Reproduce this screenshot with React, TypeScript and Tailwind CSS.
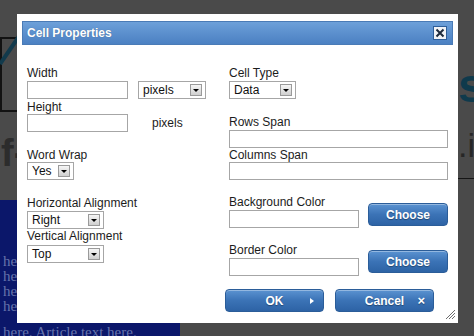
import React from "react";

const font = { fontFamily: '"Liberation Sans", Arial, sans-serif' };

const Label: React.FC<{ children: React.ReactNode; className?: string }> = ({ children, className = "" }) => (
    <div className={`h-[14px] whitespace-nowrap text-[12px] leading-[14px] text-[#1c1c1c] ${className}`}>{children}</div>
);

const Field: React.FC<{ className?: string }> = ({ className = "" }) => (
    <input readOnly className={`block h-[18px] border border-[#a6a6a6] bg-white outline-none ${className}`} />
);

const Select: React.FC<{ value: string; className?: string }> = ({ value, className = "" }) => (
    <div className={`flex h-[18px] items-center justify-between border border-[#a6a6a6] bg-white pl-[4px] pr-[3px] ${className}`}>
        <span className="text-[12px] leading-none text-[#111]">{value}</span>
        <span className="flex h-[12px] w-[12px] items-center justify-center border border-[#9a9a9a] bg-gradient-to-b from-[#f6f6f6] to-[#cfcfcf]">
            <span className="h-0 w-0 border-x-[3px] border-t-[3px] border-x-transparent border-t-black" />
        </span>
    </div>
);

const BlueButton: React.FC<{ children: React.ReactNode; className?: string; icon?: React.ReactNode }> = ({ children, className = "", icon }) => (
    <button className={`relative flex h-[23px] items-center justify-center rounded-[4px] border border-[#2b5d99] bg-gradient-to-b from-[#5b93d1] via-[#3b73b6] to-[#2d63a5] text-[12px] font-bold text-white shadow-[inset_0_1px_0_rgba(255,255,255,0.35)] [text-shadow:0_1px_1px_rgba(0,0,0,0.35)] ${className}`}>
        {children}
        {icon}
    </button>
);

const App: React.FC = () => {
    return (
        <div className="relative h-[336px] w-[474px] overflow-hidden bg-[#4a4a4a]" style={font}>
            {/* dimmed page behind the dialog */}
            <div className="flex h-full">
                <div className="flex w-[180px] flex-col">
                    <div className="relative h-[200px]">
                        <div className="ml-0 mt-[37px] h-[75px] w-[60px] border-2 border-[#121212]" />
                        <svg className="absolute left-0 top-[28px]" width="30" height="40" viewBox="0 0 30 40">
                            <line x1="0" y1="36" x2="22" y2="4" stroke="#123a4c" strokeWidth="4" />
                        </svg>
                        <div className="mt-[22px] pl-[1px] text-[38px] font-bold leading-none text-[#2c2c2c]">f-</div>
                    </div>
                    <div className="flex-1 overflow-hidden whitespace-nowrap bg-[#0b176a] pl-[3px] pt-[54px] text-[15px] leading-[15px] text-[#6673ab]" style={{ fontFamily: '"Liberation Serif", serif' }}>
                        <div>here. Article text here.</div>
                        <div>here. Article text here.</div>
                        <div>here. Article text here.</div>
                        <div>here. Article text here.</div>
                        <div className="mt-[11px]">here. Article text here.</div>
                    </div>
                </div>
                <div className="flex-1" />
                <div className="flex w-[16px] flex-col overflow-hidden whitespace-nowrap">
                    <div className="mt-[62px] text-[48px] font-bold leading-none text-[#0f3a4c]">s</div>
                    <div className="mt-[18px] text-[34px] leading-none text-[#262626]">.i</div>
                    <div className="mt-[16px] h-px bg-[#151515]" />
                </div>
            </div>

            {/* dialog */}
            <div className="absolute left-[17px] top-[14px] h-[309px] w-[441px] bg-white">
                <div className="mx-[5px] mt-[7px] flex h-[24px] items-center justify-between border border-[#4a7bb6] bg-gradient-to-b from-[#6da0d9] to-[#4b80c2] pl-[4px] pr-[5px]">
                    <span className="text-[12px] font-bold text-white [text-shadow:0_0_1px_rgba(0,0,0,0.3)]">Cell Properties</span>
                    <svg width="14" height="14" viewBox="0 0 14 14">
                        <rect x="0.5" y="0.5" width="13" height="13" fill="#f2f4f7" stroke="#2f5f9a" />
                        <path d="M3.5 3.5 L10.5 10.5 M10.5 3.5 L3.5 10.5" stroke="#1d2a3c" strokeWidth="2" />
                    </svg>
                </div>

                <div className="flex px-[10px] pt-[21px]">
                    <div className="w-[202px]">
                        <Label>Width</Label>
                        <div className="mt-px flex items-center">
                            <Field className="w-[101px]" />
                            <Select value="pixels" className="ml-[10px] w-[68px]" />
                        </div>
                        <Label className="mt-px">Height</Label>
                        <div className="flex items-center">
                            <Field className="w-[101px]" />
                            <span className="ml-[24px] text-[12px] text-[#1c1c1c]">pixels</span>
                        </div>
                        <Label className="mt-[16px]">Word Wrap</Label>
                        <Select value="Yes" className="w-[47px]" />
                        <Label className="mt-[16px]">Horizontal Alignment</Label>
                        <Select value="Right" className="mt-px w-[77px]" />
                        <Label>Vertical Alignment</Label>
                        <Select value="Top" className="mt-[2px] w-[77px]" />
                    </div>

                    <div className="w-[219px]">
                        <Label>Cell Type</Label>
                        <Select value="Data" className="mt-px w-[67px]" />
                        <Label className="mt-[16px]">Rows Span</Label>
                        <Field className="mt-px w-[219px]" />
                        <Label>Columns Span</Label>
                        <Field className="w-[219px]" />
                        <div className="mt-[15px] flex items-end">
                            <div className="w-[130px]">
                                <Label>Background Color</Label>
                                <Field className="mt-px w-[130px]" />
                            </div>
                            <BlueButton className="mb-[2px] ml-[9px] w-[80px]">Choose</BlueButton>
                        </div>
                        <div className="mt-[15px] flex items-end">
                            <div className="w-[130px]">
                                <Label>Border Color</Label>
                                <Field className="mt-px w-[130px]" />
                            </div>
                            <BlueButton className="mb-[3px] ml-[9px] w-[80px]">Choose</BlueButton>
                        </div>
                        <div className="-ml-[4px] mt-[13px] flex gap-[11px]">
                            <BlueButton
                                className="w-[99px]"
                                icon={<span className="absolute right-[9px] top-[8px] h-0 w-0 border-y-[3.5px] border-l-[4px] border-y-transparent border-l-white" />}
                            >
                                OK
                            </BlueButton>
                            <BlueButton
                                className="w-[99px]"
                                icon={<span className="absolute right-[8px] top-[3px] text-[13px] leading-[15px]">×</span>}
                            >
                                Cancel
                            </BlueButton>
                        </div>
                    </div>
                </div>

                <svg className="absolute bottom-[3px] right-[2px]" width="11" height="11" viewBox="0 0 11 11">
                    <path d="M1 10 L10 1 M4 10 L10 4 M7 10 L10 7" stroke="#6e6e6e" strokeWidth="1" />
                </svg>
            </div>
        </div>
    );
};

export default App;
